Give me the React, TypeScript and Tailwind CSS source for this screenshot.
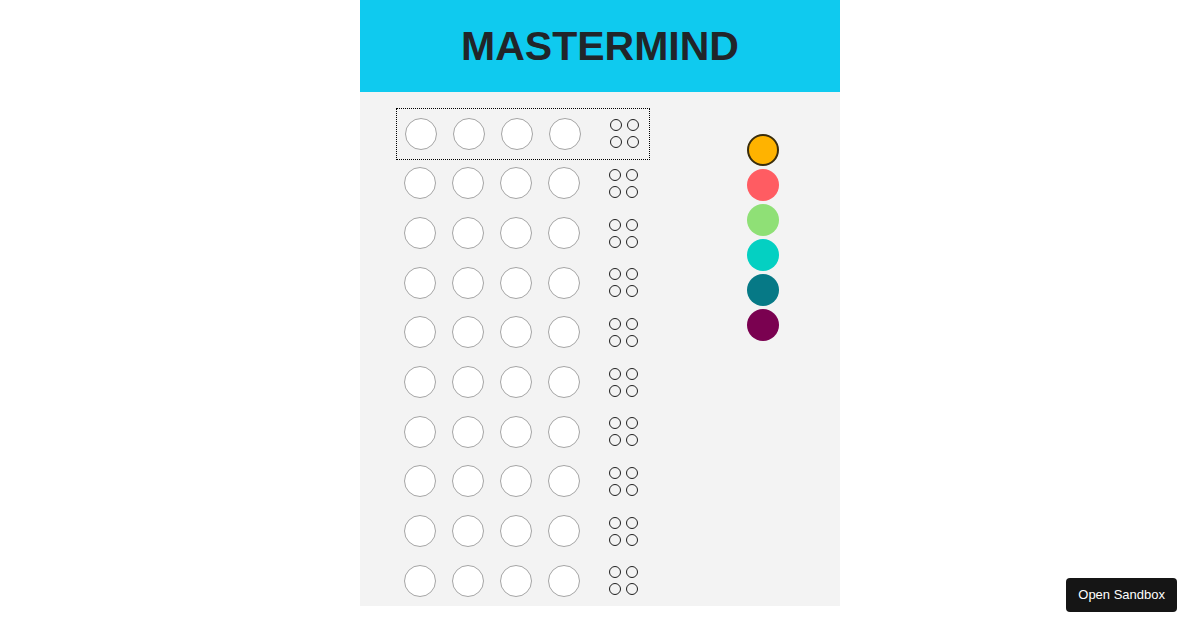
import React from 'react';

const ROWS = 10;
const PALETTE = ['#ffb300', '#ff5c62', '#8fe076', '#04d0c2', '#067986', '#7a0150'];

function Row({ active }: { active: boolean }) {
  return (
    <div
      className={`flex items-center h-[49.67px] pl-2 ${
        active ? 'ml-px w-[252px] outline outline-1 outline-dotted outline-black' : 'w-[253px]'
      }`}
    >
      <div className="flex gap-4">
        {[0, 1, 2, 3].map((i) => (
          <div key={i} className="w-8 h-8 rounded-full bg-white border border-[#a5a5a5]" />
        ))}
      </div>
      <div className="ml-[29px] grid grid-cols-2 gap-x-[4.5px] gap-y-[5px]">
        {[0, 1, 2, 3].map((i) => (
          <div key={i} className="w-3 h-3 rounded-full border-[1.3px] border-[#1f1f1f]" />
        ))}
      </div>
    </div>
  );
}

export default function App() {
  return (
    <div className="min-h-[630px] bg-white" style={{ fontFamily: '"Liberation Sans", Arial, sans-serif' }}>
      <div className="w-[480px] mx-auto">
        <header className="h-[92px] bg-[#0fcaef] flex items-center justify-center">
          <h1 className="text-[41px] font-bold text-[#212529] leading-none pt-px">MASTERMIND</h1>
        </header>
        <main className="bg-[#f3f3f3] flex pt-[17px]">
          <div className="ml-[36px] flex flex-col">
            {Array.from({ length: ROWS }).map((_, i) => (
              <Row key={i} active={i === 0} />
            ))}
          </div>
          <div className="ml-auto mr-[61px] mt-[25px] flex flex-col gap-[3px]">
            {PALETTE.map((c, i) => (
              <div
                key={c}
                className={`w-8 h-8 rounded-full ${i === 0 ? 'border-2 border-[#3a2d0c]' : ''}`}
                style={{ backgroundColor: c }}
              />
            ))}
          </div>
        </main>
      </div>
      <button className="fixed right-[23px] bottom-[18px] h-[34px] px-3 rounded bg-[#151515] text-white text-[13px]">
        Open Sandbox
      </button>
    </div>
  );
}
